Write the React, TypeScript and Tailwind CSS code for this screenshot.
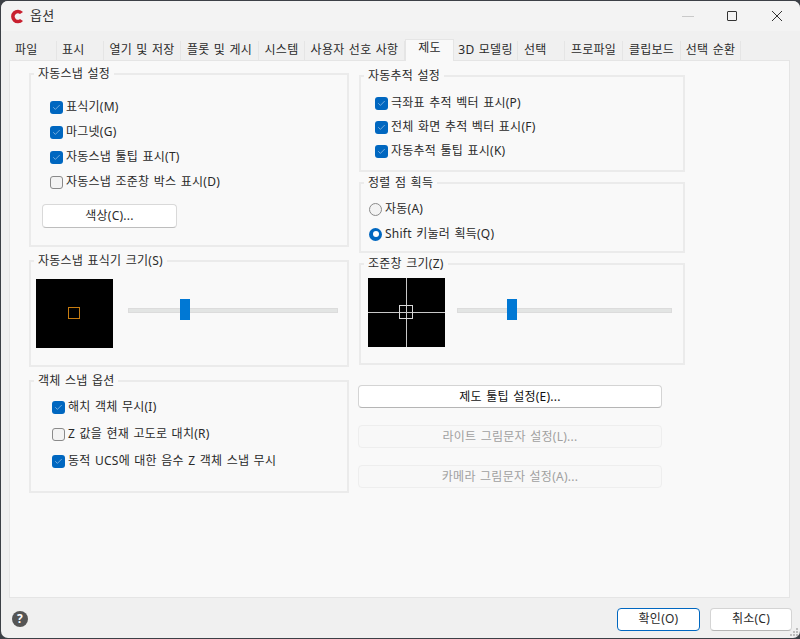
import { Check } from 'lucide-react';

const TABS = [
  ['파일', 'w-[46px] pl-[4px] text-left'],
  ['표시', 'w-[47px] pl-[5px] text-left'],
  ['열기 및 저장', 'w-[77px]'],
  ['플롯 및 게시', 'w-[78px]'],
  ['시스템', 'w-[46px]'],
  ['사용자 선호 사항', 'w-[100px]'],
  ['제도', 'w-[49px]'],
  ['3D 모델링', 'w-[64px]'],
  ['선택', 'w-[47px] pl-[6px] text-left'],
  ['프로파일', 'w-[58px]'],
  ['클립보드', 'w-[58px]'],
  ['선택 순환', 'w-[60px]'],
];

function Tabs() {
  return (
    <div className="flex h-[21px] items-end pl-[10px]">
      {TABS.map(([label, cls]) => label === '제도' ? (
        <div key={label} className={`relative z-10 -mb-px h-[22px] border border-b-0 border-[#e5e5e5] bg-[#f9f9f9] text-center leading-[16px] ${cls}`}>{label}</div>
      ) : (
        <div key={label} className={`h-[19px] border-r border-[#e5e5e5] bg-[#f0f0f0] leading-[18px] text-center ${cls}`}>{label}</div>
      ))}
    </div>
  );
}

function Group({ title, className, children }: { title: string; className: string; children?: React.ReactNode }) {
  return (
    <div className={`relative border-2 border-[#ebebeb] ${className}`}>
      <span className="absolute -top-[9px] left-[3px] bg-[#f9f9f9] px-[4px] leading-[16px] whitespace-nowrap">{title}</span>
      {children}
    </div>
  );
}

function CheckRow({ label, checked, className }: { label: string; checked?: boolean; className?: string }) {
  return (
    <div className={`flex items-center gap-[3px] h-[16px] whitespace-nowrap ${className || ''}`}>
      {checked ? (
        <span className="flex h-[13px] w-[13px] items-center justify-center rounded-[3px] bg-[#0067c0]">
          <Check size={9} strokeWidth={1.5} className="text-[#cfe0f2]" />
        </span>
      ) : (
        <span className="h-[13px] w-[13px] rounded-[3px] border border-[#8a8a8a] bg-[#f3f3f3]" />
      )}
      <span>{label}</span>
    </div>
  );
}

function Radio({ label, on }: { label: string; on?: boolean }) {
  return (
    <div className="flex items-center gap-[3px] h-[16px] whitespace-nowrap">
      {on ? (
        <span className="flex h-[13px] w-[13px] items-center justify-center rounded-full bg-[#0067c0]">
          <span className="h-[6px] w-[6px] rounded-full bg-white" />
        </span>
      ) : (
        <span className="h-[13px] w-[13px] rounded-full border border-[#8a8a8a] bg-[#f3f3f3]" />
      )}
      <span>{label}</span>
    </div>
  );
}

function Slider({ track, thumb }: { track: string; thumb: string }) {
  return (
    <div className={`relative h-[5px] bg-[#e3e5e4] border border-[#dcdcdc] ${track}`}>
      <span className={`absolute -top-[10px] h-[21px] w-[10px] bg-[#0078d4] ${thumb}`} />
    </div>
  );
}

function Btn({ label, cls }: { label: string; cls: string }) {
  return <div className={`flex items-center justify-center rounded-[4px] ${cls}`}>{label}</div>;
}

export default function App() {
  return (
    <div className="h-[639px] w-[800px] overflow-hidden bg-[#3c4046] pl-px pt-px pb-px font-['Noto_Sans','Noto_Sans_CJK_KR',sans-serif] text-[12px] tracking-[0.25px] [word-spacing:1px] text-[#2a2a2a]">
      <div className="flex h-[637px] w-[799px] flex-col rounded-[7px] bg-[#f0f0f0]">
        <div className="flex h-[30px] items-center rounded-t-[7px] bg-[#f3f3f3]">
          <svg viewBox="0 0 13 15" className="ml-[10px] h-[15px] w-[13px]">
            <path d="M12 3 A6.8 6.8 0 1 0 12 12 L9 10 A3.2 3.2 0 1 1 9 5 Z" fill="#c8202f" />
          </svg>
          <span className="ml-[6px] text-[13px] text-[#333]">옵션</span>
          <div className="ml-auto flex items-center">
            <span className="h-px w-[12px] bg-[#c9c9c9]" />
            <span className="ml-[33px] h-[10px] w-[10px] rounded-[1px] border border-[#333]" />
            <svg viewBox="0 0 10 10" className="ml-[35px] mr-[18px] h-[10px] w-[10px]" stroke="#333" strokeWidth="1">
              <path d="M0 0 L10 10 M10 0 L0 10" />
            </svg>
          </div>
        </div>

        <div className="pt-[8px]"><Tabs /></div>

        <div className="ml-[8px] h-[538px] w-[781px] border border-[#e5e5e5] bg-[#f9f9f9]">
          <div className="flex pl-[19px] pt-[12px]">
            <div className="flex w-[320px] flex-col gap-[13px]">
              <Group title="자동스냅 설정" className="h-[174px] pl-[19px] pt-[24px]">
                <div className="flex flex-col gap-[9px]">
                  <CheckRow label="표식기(M)" checked />
                  <CheckRow label="마그넷(G)" checked />
                  <CheckRow label="자동스냅 툴팁 표시(T)" checked />
                  <CheckRow label="자동스냅 조준창 박스 표시(D)" />
                </div>
                <Btn label="색상(C)..." cls="-ml-[8px] mt-[14px] h-[24px] w-[135px] border border-[#d9d9d9] border-b-[#bdbdbd] bg-white" />
              </Group>
              <Group title="자동스냅 표식기 크기(S)" className="h-[107px]">
                <div className="flex items-center pl-[5px] pt-[17px]">
                  <div className="flex h-[69px] w-[77px] items-center justify-center bg-black">
                    <span className="mb-[2px] mr-[2px] h-[12px] w-[12px] border border-[#c77c10]" />
                  </div>
                  <Slider track="ml-[15px] -mt-[6px] w-[210px]" thumb="left-[51px]" />
                </div>
              </Group>
              <Group title="객체 스냅 옵션" className="h-[113px] pl-[21px] pt-[17px]">
                <div className="flex flex-col gap-[11px]">
                  <CheckRow label="해치 객체 무시(I)" checked />
                  <CheckRow label="Z 값을 현재 고도로 대치(R)" />
                  <CheckRow label="동적 UCS에 대한 음수 Z 객체 스냅 무시" checked />
                </div>
              </Group>
            </div>

            <div className="ml-[10px] flex w-[326px] flex-col gap-[10px] pt-[2px]">
              <Group title="자동추적 설정" className="h-[97px] pl-[14px] pt-[18px]">
                <div className="flex flex-col gap-[8px]">
                  <CheckRow label="극좌표 추적 벡터 표시(P)" checked />
                  <CheckRow label="전체 화면 추적 벡터 표시(F)" checked />
                  <CheckRow label="자동추적 툴팁 표시(K)" checked />
                </div>
              </Group>
              <Group title="정렬 점 획득" className="h-[71px] pl-[8px] pt-[17px]">
                <div className="flex flex-col gap-[9px]">
                  <Radio label="자동(A)" />
                  <Radio label="Shift 키눌러 획득(Q)" on />
                </div>
              </Group>
              <Group title="조준창 크기(Z)" className="h-[102px]">
                <div className="flex items-center pl-[7px] pt-[13px]">
                  <div className="relative h-[69px] w-[77px] bg-black">
                    <span className="absolute left-[38px] top-0 h-full w-px bg-[#c8c8c8]" />
                    <span className="absolute left-0 top-[34px] h-px w-full bg-[#c8c8c8]" />
                    <span className="absolute left-[31px] top-[27px] h-[14px] w-[14px] border border-[#d8d8d8]" />
                  </div>
                  <Slider track="ml-[12px] -mt-[5px] w-[215px]" thumb="left-[49px]" />
                </div>
              </Group>
              <div className="-ml-px mt-[10px] flex flex-col gap-[17px]">
                <Btn label="제도 툴팁 설정(E)..." cls="h-[23px] w-[304px] border border-[#d4d4d4] border-b-[#b5b5b5] bg-white text-[#111]" />
                <Btn label="라이트 그림문자 설정(L)..." cls="h-[23px] w-[304px] border border-[#eeeeee] bg-[#f8f8f8] text-[#a0a0a0]" />
                <Btn label="카메라 그림문자 설정(A)..." cls="h-[23px] w-[304px] border border-[#eeeeee] bg-[#f8f8f8] text-[#a0a0a0]" />
              </div>
            </div>
          </div>
        </div>

        <div className="relative flex flex-1 items-center pl-[11px] pt-[2px]">
          <span className="flex h-[16px] w-[16px] items-center justify-center rounded-full bg-[#555] text-[12px] font-bold leading-none text-white">?</span>
          <Btn label="확인(O)" cls="ml-auto h-[23px] w-[83px] border border-[#0067c0] bg-white" />
          <Btn label="취소(C)" cls="ml-[10px] mr-[8px] h-[23px] w-[82px] border border-[#d4d4d4] border-b-[#b5b5b5] bg-white" />
          <svg viewBox="0 0 9 9" className="absolute bottom-[1px] right-[1px] h-[9px] w-[9px]" fill="#bdbdbd">
            <rect x="6" y="0" width="2" height="2" /><rect x="3" y="3" width="2" height="2" /><rect x="6" y="3" width="2" height="2" />
            <rect x="0" y="6" width="2" height="2" /><rect x="3" y="6" width="2" height="2" /><rect x="6" y="6" width="2" height="2" />
          </svg>
        </div>
      </div>
    </div>
  );
}
